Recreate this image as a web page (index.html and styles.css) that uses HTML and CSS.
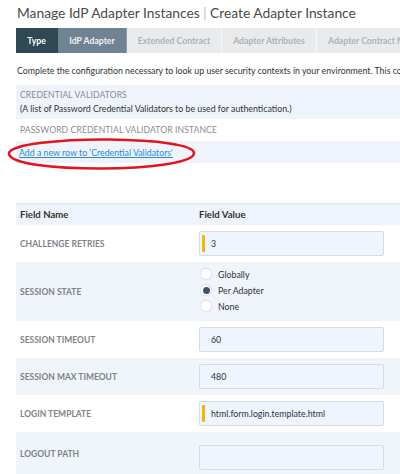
FILE: index.html
```html
<!DOCTYPE html>
<html>
<head>
<meta charset="utf-8">
<link rel="stylesheet" href="styles.css">
</head>
<body>
<div class="page">
  <h1 class="title">Manage IdP Adapter Instances <span class="sep">|</span> Create Adapter Instance</h1>
  <div class="tabs">
    <div class="tab tab-done">Type</div>
    <div class="tab tab-active">IdP Adapter</div>
    <div class="tab">Extended Contract</div>
    <div class="tab">Adapter Attributes</div>
    <div class="tab">Adapter Contract Mapping</div>
  </div>
  <p class="desc">Complete the configuration necessary to look up user security contexts in your environment. This configuration was designed into the adapter for use at your site.</p>

  <div class="cred">
    <div class="band band-tall">
      <div class="caps">CREDENTIAL VALIDATORS</div>
      <div class="note">(A list of Password Credential Validators to be used for authentication.)</div>
    </div>
    <div class="band band-white">
      <div class="caps">PASSWORD CREDENTIAL VALIDATOR INSTANCE</div>
    </div>
    <div class="band band-link">
      <a class="link" href="#">Add a new row to 'Credential Validators'</a>
    </div>
    <svg class="circle" width="192" height="34" viewBox="0 0 192 34">
      <path d="M4 17 C 2 7, 60 2, 104 2.5 C 152 3, 189 8, 189 16 C 189 26, 142 31.5, 96 31.5 C 48 31.5, 6 27, 4 17 Z" fill="none" stroke="#e3141c" stroke-width="2.6"/>
    </svg>
  </div>

  <div class="table">
    <div class="row row-head">
      <div class="cell-name head">Field Name</div>
      <div class="cell-value head">Field Value</div>
    </div>
    <div class="row">
      <div class="cell-name label">CHALLENGE RETRIES</div>
      <div class="cell-value"><div class="input required">3</div></div>
    </div>
    <div class="row row-alt row-radio">
      <div class="cell-name label">SESSION STATE</div>
      <div class="cell-value radios">
        <div class="radio"><span class="dot"></span>Globally</div>
        <div class="radio"><span class="dot dot-on"></span>Per Adapter</div>
        <div class="radio"><span class="dot"></span>None</div>
      </div>
    </div>
    <div class="row">
      <div class="cell-name label">SESSION TIMEOUT</div>
      <div class="cell-value"><div class="input">60</div></div>
    </div>
    <div class="row row-alt">
      <div class="cell-name label">SESSION MAX TIMEOUT</div>
      <div class="cell-value"><div class="input">480</div></div>
    </div>
    <div class="row">
      <div class="cell-name label">LOGIN TEMPLATE</div>
      <div class="cell-value"><div class="input required">html.form.login.template.html</div></div>
    </div>
    <div class="row row-alt row-last">
      <div class="cell-name label">LOGOUT PATH</div>
      <div class="cell-value"><div class="input"></div></div>
    </div>
  </div>
</div>
</body>
</html>
```
FILE: styles.css
```css
html, body {
  margin: 0;
  padding: 0;
  background: #ffffff;
  overflow: hidden;
}
body {
  font-family: Lato, "Liberation Sans", sans-serif;
  color: #333;
  width: 400px;
  height: 474px;
}
.page {
  padding-left: 16px;
  white-space: nowrap;
  overflow: hidden;
}
.title {
  margin: 0;
  padding-top: 4px;
  height: 24px;
  font-size: 13.8px;
  font-weight: 400;
  color: #4a4a4a;
  line-height: 18px;
  padding-left: 1px;
}
.sep {
  color: #777;
  font-weight: 300;
}
.tabs {
  display: flex;
  height: 25px;
  background: #e9eaeb;
  width: 384px;
  overflow: hidden;
}
.tab {
  display: flex;
  align-items: center;
  justify-content: center;
  font-size: 8.7px;
  font-weight: 700;
  color: #aeb2b6;
  background: #e9eaeb;
  border-right: 1px solid #f6f6f6;
  padding: 0 11px;
  flex: none;
}
.tab:nth-child(1) { width: 19px; }
.tab:nth-child(2) { width: 46px; }
.tab:nth-child(3) { width: 72px; }
.tab:nth-child(4) { width: 72px; }
.tab:nth-child(5) { justify-content: flex-start; }
.tab-done {
  background: #2f4852;
  color: #ffffff;
  border-right-color: #2f4852;
}
.tab-active {
  background: #6f8393;
  color: #eef2f5;
  border-right-color: #8a9aa6;
}
.desc {
  margin: 0;
  padding-top: 12px;
  height: 20px;
  font-size: 8.8px;
  line-height: 12px;
  color: #333;
  padding-left: 1px;
  width: 383px;
  overflow: hidden;
}
.cred {
  position: relative;
}
.band {
  background: #eff3fb;
  padding-left: 4px;
  width: 400px;
}
.band-tall {
  height: 34px;
  display: flex;
  flex-direction: column;
  justify-content: center;
}
.band-white {
  background: #ffffff;
  height: 22px;
  display: flex;
  align-items: center;
}
.band-link {
  height: 22px;
  display: flex;
  align-items: center;
  padding-left: 3px;
}
.caps {
  font-size: 8.6px;
  color: #8a8d90;
  line-height: 13px;
  letter-spacing: 0.1px;
}
.note {
  font-size: 8.8px;
  color: #333;
  line-height: 13px;
}
.link {
  font-size: 8.8px;
  color: #2a8ad3;
  text-decoration: underline;
}
.circle {
  position: absolute;
  left: -11px;
  top: 52px;
}
.table {
  margin-top: 40px;
  width: 384px;
}
.row {
  display: flex;
  align-items: center;
  height: 37px;
  background: #ffffff;
}
.row-alt {
  background: #f0f4fb;
}
.row-head {
  height: 21px;
  background: #eff3fb;
  border-top: 1px solid #e2e7ef;
}
.row-radio {
  height: 59px;
}
.row-last {
  height: 44px;
  align-items: flex-start;
}
.row-last .cell-name {
  padding-top: 17px;
}
.row-last .cell-value {
  padding-top: 13px;
}
.cell-name {
  width: 179px;
  padding-left: 4px;
  flex: none;
}
.cell-value {
  flex: none;
}
.head {
  font-size: 9.6px;
  font-weight: 700;
  color: #333;
}
.label {
  font-size: 8.5px;
  font-weight: 700;
  color: #7f8387;
}
.input {
  width: 172px;
  height: 23px;
  border: 1px solid #d6dce3;
  border-radius: 2px;
  background: #eff5fe;
  box-sizing: content-box;
  padding-left: 11px;
  font-size: 8.8px;
  line-height: 23px;
  color: #333;
  position: relative;
}
.required::before {
  content: "";
  position: absolute;
  left: 2px;
  top: 3px;
  width: 3px;
  height: 17px;
  background: #f2b705;
  border-radius: 1px;
}
.radios {
  display: flex;
  flex-direction: column;
  gap: 4px;
  padding-left: 1px;
  padding-bottom: 3px;
}
.radio {
  display: flex;
  align-items: center;
  font-size: 8.8px;
  color: #333;
  height: 12px;
}
.dot {
  width: 10px;
  height: 10px;
  border-radius: 50%;
  background: #ffffff;
  border: 1px solid #e4e8ee;
  box-shadow: 0 0 1px rgba(0,0,0,0.12);
  margin-right: 6px;
  position: relative;
  flex: none;
}
.dot-on::after {
  content: "";
  position: absolute;
  left: 1.5px;
  top: 1.5px;
  width: 7px;
  height: 7px;
  border-radius: 50%;
  background: #3e5568;
}
```
